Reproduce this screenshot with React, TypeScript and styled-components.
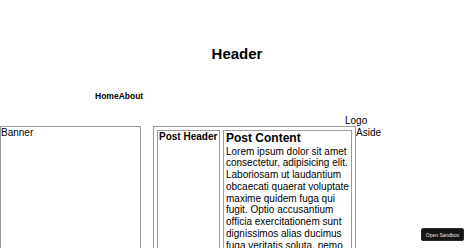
import React from "react";
import styled, { createGlobalStyle } from "styled-components";

const GlobalStyle = createGlobalStyle`
  html, body {
    margin: 0;
    padding: 0;
    background: #ffffff;
  }
  body {
    font-family: "Liberation Sans", Arial, sans-serif;
    font-size: 10px;
    line-height: normal;
    color: #000000;
    overflow: hidden;
  }
`;

const Page = styled.div`
  display: flex;
  flex-direction: column;
  width: 474px;
`;

const TopHeader = styled.header`
  padding-top: 45px;
  text-align: center;
`;

const Title = styled.h1`
  margin: 0;
  font-size: 15px;
  font-weight: 700;
  line-height: normal;
`;

const Nav = styled.nav`
  margin-top: 28px;
  padding-left: 95px;
`;

const NavList = styled.ul`
  display: flex;
  margin: 0;
  padding: 0;
  list-style: none;
`;

const NavLink = styled.a`
  font-size: 8.5px;
  font-weight: 700;
  color: #000000;
  text-decoration: none;
`;

const LogoRow = styled.div`
  margin-top: 14px;
  padding-left: 345px;
  height: 10.5px;
  line-height: 11.5px;
`;

const ContentRow = styled.div`
  display: flex;
  align-items: stretch;
  min-height: 300px;
`;

const Box = styled.div`
  box-sizing: border-box;
  border: 1px solid #9a9a9a;
`;

const Banner = styled(Box)<{ $width: number }>`
  width: ${(p) => p.$width}px;
  margin-right: 12px;
  flex: none;
`;

const Main = styled(Box)`
  display: flex;
  gap: 3px;
  width: 203px;
  padding: 3px;
  flex: none;
`;

const PostHeader = styled(Box)`
  width: 63px;
  padding: 0 1px;
  flex: none;
  font-size: 10px;
  font-weight: 700;
`;

const PostContent = styled(Box)`
  width: 129px;
  padding: 0 1px 0 2px;
  flex: none;
`;

const PostTitle = styled.h2`
  margin: 0 0 1px;
  font-size: 12px;
  font-weight: 700;
  line-height: normal;
`;

const PostText = styled.p`
  margin: 0;
  font-size: 10px;
  line-height: 11.8px;
`;

const Aside = styled.aside`
  flex: 1;
  padding-top: 1px;
`;

const SandboxButton = styled.a`
  position: fixed;
  right: 10px;
  bottom: 7px;
  display: flex;
  align-items: center;
  justify-content: center;
  width: 43px;
  height: 13px;
  border-radius: 2px;
  background: #151515;
  border: 1px solid #2a2a2a;
  box-sizing: border-box;
  color: #e8e8e8;
  font-family: "Liberation Sans", Arial, sans-serif;
  font-size: 5px;
  text-decoration: none;
  white-space: nowrap;
`;

const loremText =
  "Lorem ipsum dolor sit amet consectetur, adipisicing elit. Laboriosam ut laudantium obcaecati quaerat voluptate maxime quidem fuga qui fugit. Optio accusantium officia exercitationem sunt dignissimos alias ducimus fuga veritatis soluta, nemo natus eius quos nisi delectus repellendus tempora.";

export default function App() {
  return (
    <>
      <GlobalStyle />
      <Page>
        <TopHeader>
          <Title>Header</Title>
        </TopHeader>
        <Nav>
          <NavList>
            <li>
              <NavLink href="#">Home</NavLink>
            </li>
            <li>
              <NavLink href="#">About</NavLink>
            </li>
          </NavList>
        </Nav>
        <LogoRow>Logo</LogoRow>
        <ContentRow>
          <Banner $width={141}>Banner</Banner>
          <Main>
            <PostHeader>Post Header</PostHeader>
            <PostContent>
              <PostTitle>Post Content</PostTitle>
              <PostText>{loremText}</PostText>
            </PostContent>
          </Main>
          <Aside>Aside</Aside>
        </ContentRow>
      </Page>
      <SandboxButton href="#">Open Sandbox</SandboxButton>
    </>
  );
}
